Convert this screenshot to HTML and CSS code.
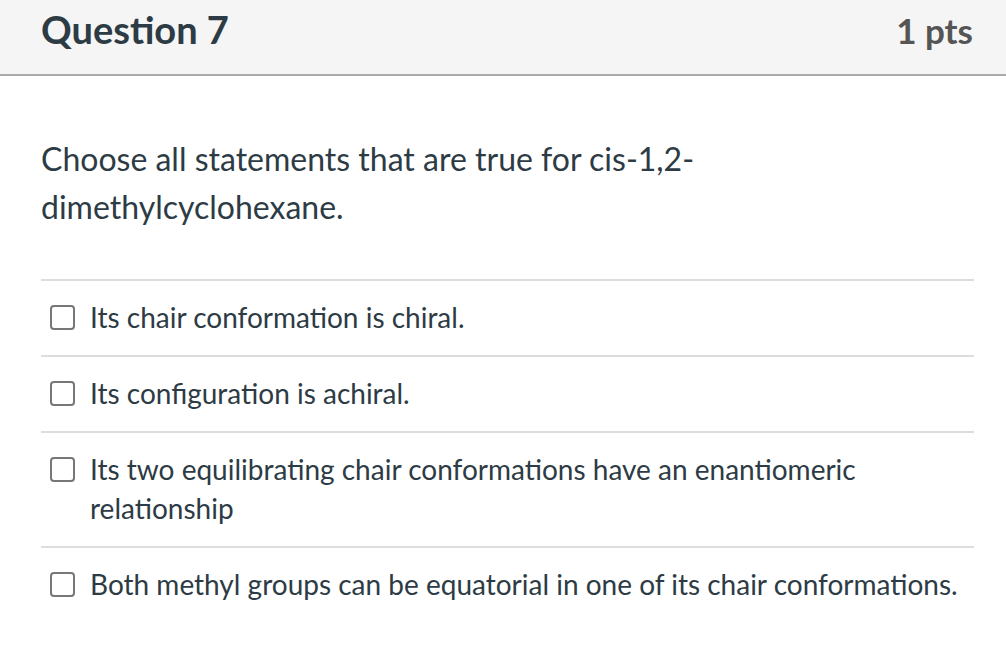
FILE: index.html
```html
<!DOCTYPE html>
<html>
<head>
<meta charset="utf-8">
<link rel="stylesheet" href="styles.css">
</head>
<body>
<div class="question">
  <div class="header">
    <h2 class="title">Question 7</h2>
    <span class="points">1 pts</span>
  </div>
  <div class="content">
    <p class="prompt">Choose all statements that are true for cis-1,2-<br>dimethylcyclohexane.</p>
    <div class="answers">
      <label class="answer"><span class="box"></span><span class="text">Its chair conformation is chiral.</span></label>
      <label class="answer"><span class="box"></span><span class="text">Its configuration is achiral.</span></label>
      <label class="answer"><span class="box"></span><span class="text">Its two equilibrating chair conformations have an enantiomeric relationship</span></label>
      <label class="answer"><span class="box"></span><span class="text">Both methyl groups can be equatorial in one of its chair conformations.</span></label>
    </div>
  </div>
</div>
</body>
</html>
```

FILE: styles.css
```css
html, body {
  margin: 0;
  padding: 0;
  background: #ffffff;
}
body {
  font-family: Lato, "Open Sans", sans-serif;
  color: #2d3b45;
}
.header {
  display: flex;
  justify-content: space-between;
  align-items: baseline;
  box-sizing: border-box;
  height: 76px;
  padding: 7px 33px 0 41px;
  background: #f5f5f5;
  border-bottom: 2px solid #aaaaaa;
}
.title {
  margin: 0;
  font-size: 38px;
  line-height: 1.2;
  font-weight: 700;
  color: #2d3b45;
}
.points {
  font-size: 35px;
  font-weight: 700;
  color: #555555;
}
.content {
  padding: 0 32px 0 41px;
}
.prompt {
  margin: 0;
  padding-top: 59px;
  font-size: 32px;
  line-height: 48px;
}
.answers {
  margin-top: 48px;
}
.answer {
  display: flex;
  align-items: flex-start;
  border-top: 2px solid #dddddd;
  padding: 17px 0 18px 9px;
}
.box {
  flex: none;
  width: 21px;
  height: 21px;
  border: 2px solid #777777;
  border-radius: 4px;
  margin-top: 7px;
  margin-right: 15px;
}
.text {
  font-size: 28px;
  line-height: 39px;
}
```
